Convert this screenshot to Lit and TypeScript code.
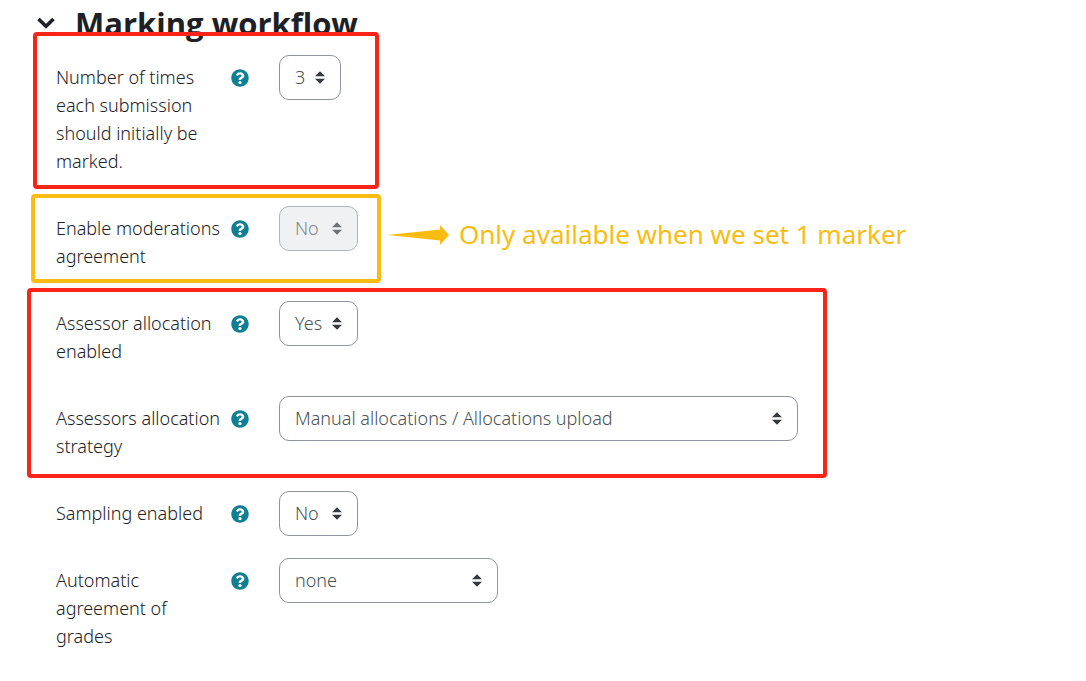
import { LitElement, html, css, svg } from "lit";
import { customElement, property } from "lit/decorators.js";

interface Setting {
  id: string;
  label: string;
  options: string[];
  value: string;
  size?: "wide" | "medium";
  disabled?: boolean;
}

const yesNo = ["Yes", "No"];

const markerCount: Setting = {
  id: "marker-count",
  label: "Number of times each submission should initially be marked.",
  options: ["1", "2", "3"],
  value: "3",
};
const moderation: Setting = {
  id: "moderation",
  label: "Enable moderations agreement",
  options: yesNo,
  value: "No",
  disabled: true,
};
const allocation: Setting[] = [
  { id: "allocation", label: "Assessor allocation enabled", options: yesNo, value: "Yes" },
  {
    id: "strategy",
    label: "Assessors allocation strategy",
    options: ["Manual allocations / Allocations upload"],
    value: "Manual allocations / Allocations upload",
    size: "wide",
  },
];
const remaining: Setting[] = [
  { id: "sampling", label: "Sampling enabled", options: yesNo, value: "No" },
  { id: "agreement", label: "Automatic agreement of grades", options: ["none"], value: "none", size: "medium" },
];

const questionCircle = svg`<path fill="currentColor" d="M504 256c0 136.997-111.043 248-248 248S8 392.997 8 256C8 119.083 119.043 8 256 8s248 111.083 248 248zM262.655 90c-54.497 0-89.255 22.957-116.549 63.758-3.536 5.286-2.353 12.415 2.715 16.258l34.699 26.31c5.205 3.947 12.621 3.008 16.665-2.122 17.864-22.658 30.113-35.797 57.303-35.797 20.429 0 45.698 13.148 45.698 32.958 0 14.976-12.363 22.667-32.534 33.976C247.128 238.528 216 254.941 216 296v4c0 6.627 5.373 12 12 12h56c6.627 0 12-5.373 12-12v-1.333c0-28.462 83.186-29.647 83.186-106.667 0-58.002-60.165-102-116.531-102zM256 338c-25.365 0-46 20.635-46 46 0 25.364 20.635 46 46 46s46-20.636 46-46c0-25.364-20.635-46-46-46z"/>`;

@customElement("setting-row")
export class SettingRow extends LitElement {
  @property({ attribute: false }) setting!: Setting;

  static styles = css`
    :host {
      display: grid;
      grid-template-columns: 167px 18px minmax(0, auto);
      justify-content: start;
      align-items: start;
      column-gap: 8px;
    }
    .label {
      padding: 8px 0 10px;
      line-height: 28px;
      color: #1d2125;
    }
    .help {
      display: flex;
      align-items: center;
      height: 46px;
      padding: 0;
      border: 0;
      background: none;
      color: #0f7f93;
      cursor: pointer;
    }
    .help svg {
      width: 18px;
      height: 18px;
    }
    .select {
      appearance: none;
      box-sizing: border-box;
      height: 45px;
      max-width: 100%;
      margin: 0 0 0 22px;
      padding: 0 34px 2px 15px;
      border: 1px solid #8f959e;
      border-radius: 10px;
      background: #fff
        url("data:image/svg+xml,%3Csvg xmlns='http://www.w3.org/2000/svg' viewBox='0 0 4 5'%3E%3Cpath fill='%23343a40' d='M2 0L0 2h4zm0 5L0 3h4z'/%3E%3C/svg%3E")
        no-repeat right 15px center / 10px 13px;
      font: inherit;
      color: #495057;
    }
    .select:disabled {
      background-color: #e9ecef;
      color: #495057;
      opacity: 0.7;
    }
    .wide {
      width: 519px;
    }
    .medium {
      width: 219px;
    }
  `;

  render() {
    const s = this.setting;
    return html`
      <label class="label" for=${s.id}>${s.label}</label>
      <button class="help" type="button" aria-label="Help">
        <svg viewBox="0 0 512 512" aria-hidden="true">${questionCircle}</svg>
      </button>
      <select class="select ${s.size ?? ""}" id=${s.id} ?disabled=${s.disabled}>
        ${s.options.map((o) => html`<option ?selected=${o === s.value}>${o}</option>`)}
      </select>
    `;
  }
}

@customElement("app-root")
export class AppRoot extends LitElement {
  static styles = css`
    :host {
      display: block;
      font-family: "Noto Sans", "Open Sans", sans-serif;
      font-size: 18px;
      font-weight: 350;
      color: #1d2125;
      background: #fff;
    }
    .header {
      display: flex;
      align-items: center;
      gap: 19px;
      padding: 1px 0 0 36px;
    }
    .toggle {
      display: flex;
      padding: 0;
      border: 0;
      background: none;
      color: inherit;
      cursor: pointer;
    }
    .title {
      margin: 0;
      font-family: "Open Sans", sans-serif;
      font-size: 31px;
      line-height: 44px;
      font-weight: 700;
    }
    .form {
      display: flex;
      flex-direction: column;
      align-items: flex-start;
      gap: 21px;
      padding: 10px 20px 28px 56px;
    }
    .group {
      position: relative;
      display: flex;
      flex-direction: column;
      gap: 21px;
      max-width: 100%;
    }
    /* Annotation frames drawn over the form */
    .frame {
      position: absolute;
      border: 4px solid #fa2318;
      border-radius: 4px;
      pointer-events: none;
    }
    .count {
      inset: -23px -38px -4px -23px;
    }
    .moderation {
      inset: -12px -23px -3px -25px;
      border-color: #fbbc11;
    }
    .allocation {
      inset: -13px -29px -8px -29px;
    }
    .note {
      position: absolute;
      left: 100%;
      top: 11px;
      display: flex;
      align-items: center;
      gap: 10px;
      margin: 0;
      padding-left: 29px;
      font-size: 26px;
      line-height: 34px;
      font-weight: 400;
      white-space: nowrap;
      color: #fbbc11;
    }
    .arrow {
      margin-top: 2px;
    }
  `;

  private row(setting: Setting) {
    return html`<setting-row .setting=${setting}></setting-row>`;
  }

  render() {
    return html`
      <header class="header">
        <button class="toggle" type="button" aria-label="Collapse section" aria-expanded="true">
          <svg width="20" height="14" viewBox="0 0 20 14" aria-hidden="true">
            <path d="M2.5 3L10 10.2 17.5 3" fill="none" stroke="currentColor" stroke-width="3.6" />
          </svg>
        </button>
        <h2 class="title">Marking workflow</h2>
      </header>
      <form class="form">
        <div class="group">
          ${this.row(markerCount)}
          <div class="frame count"></div>
        </div>
        <div class="group">
          ${this.row(moderation)}
          <div class="frame moderation"></div>
          <p class="note">
            <svg class="arrow" width="62" height="20" viewBox="0 0 62 20" aria-hidden="true">
              <path d="M0 10L53 4.5V0L62 10L53 20V15.5Z" fill="currentColor" />
            </svg>
            Only available when we set 1 marker
          </p>
        </div>
        <div class="group">
          ${allocation.map((s) => this.row(s))}
          <div class="frame allocation"></div>
        </div>
        ${remaining.map((s) => this.row(s))}
      </form>
    `;
  }
}
